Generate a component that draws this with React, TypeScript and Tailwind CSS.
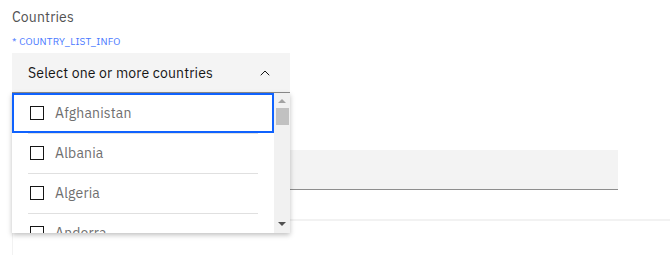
import { ChevronUp } from 'lucide-react';

const countries = ['Afghanistan', 'Albania', 'Algeria', 'Andorra', 'Angola'];

function CountryOption({ name, focused }: { name: string; focused?: boolean }) {
  return (
    <li className="relative h-10">
      <div
        className={
          focused
            ? 'flex h-10 items-center gap-[11px] border-2 border-[#0f62fe] pl-4'
            : 'flex h-10 items-center gap-[11px] pl-[18px]'
        }
      >
        <span className="h-[14px] w-[14px] border border-[#161616] bg-white" />
        <span className="text-sm tracking-[0.16px] text-[#6f6f6f]">{name}</span>
      </div>
      <div className="mx-4 h-px bg-[#e0e0e0]" />
    </li>
  );
}

function FakeScrollbar() {
  return (
    <div className="flex w-4 flex-col items-center bg-[#f1f1f1] pt-[6px]">
      <span className="h-0 w-0 border-x-4 border-b-4 border-x-transparent border-b-[#a3a3a3]" />
      <span className="mt-[5px] h-[17px] w-[13px] bg-[#c1c1c1]" />
      <span className="mt-auto mb-[7px] h-0 w-0 border-x-4 border-t-4 border-x-transparent border-t-[#505050]" />
    </div>
  );
}

export default function App() {
  return (
    <div className="relative h-[255px] w-[670px] overflow-hidden bg-white font-['IBM_Plex_Sans','Noto_Sans',sans-serif]">
      <div className="pl-3 pt-[8px]">
        <label className="block text-[14px] leading-[18px] tracking-[0.16px] text-[#525252]">
          Countries
        </label>
        <p className="mt-[10px] text-[10px] leading-[12px] tracking-[0.16px] text-[#4a79ff]">
          * COUNTRY_LIST_INFO
        </p>

        <button className="mt-[5px] flex h-10 w-[278px] items-center justify-between border-b border-[#8d8d8d] bg-[#f4f4f4] pl-4 pr-[17px] text-left">
          <span className="text-sm tracking-[0.16px] text-[#161616]">Select one or more countries</span>
          <ChevronUp size={16} strokeWidth={1.5} className="text-[#161616]" />
        </button>

        <div className="mt-[57px] h-10 w-[606px] border-b border-[#8d8d8d] bg-[#f3f3f3]" />

        <div className="mt-[29px] h-[40px] border-l border-t-2 border-[#f2f2f2]" />
      </div>

      <div className="absolute left-3 top-[93px] flex h-[140px] w-[278px] bg-white shadow-[0_2px_5px_rgba(0,0,0,0.25)]">
        <ul className="flex-1 overflow-hidden">
          {countries.map((c, i) => (
            <CountryOption key={c} name={c} focused={i === 0} />
          ))}
        </ul>
        <FakeScrollbar />
      </div>
    </div>
  );
}
